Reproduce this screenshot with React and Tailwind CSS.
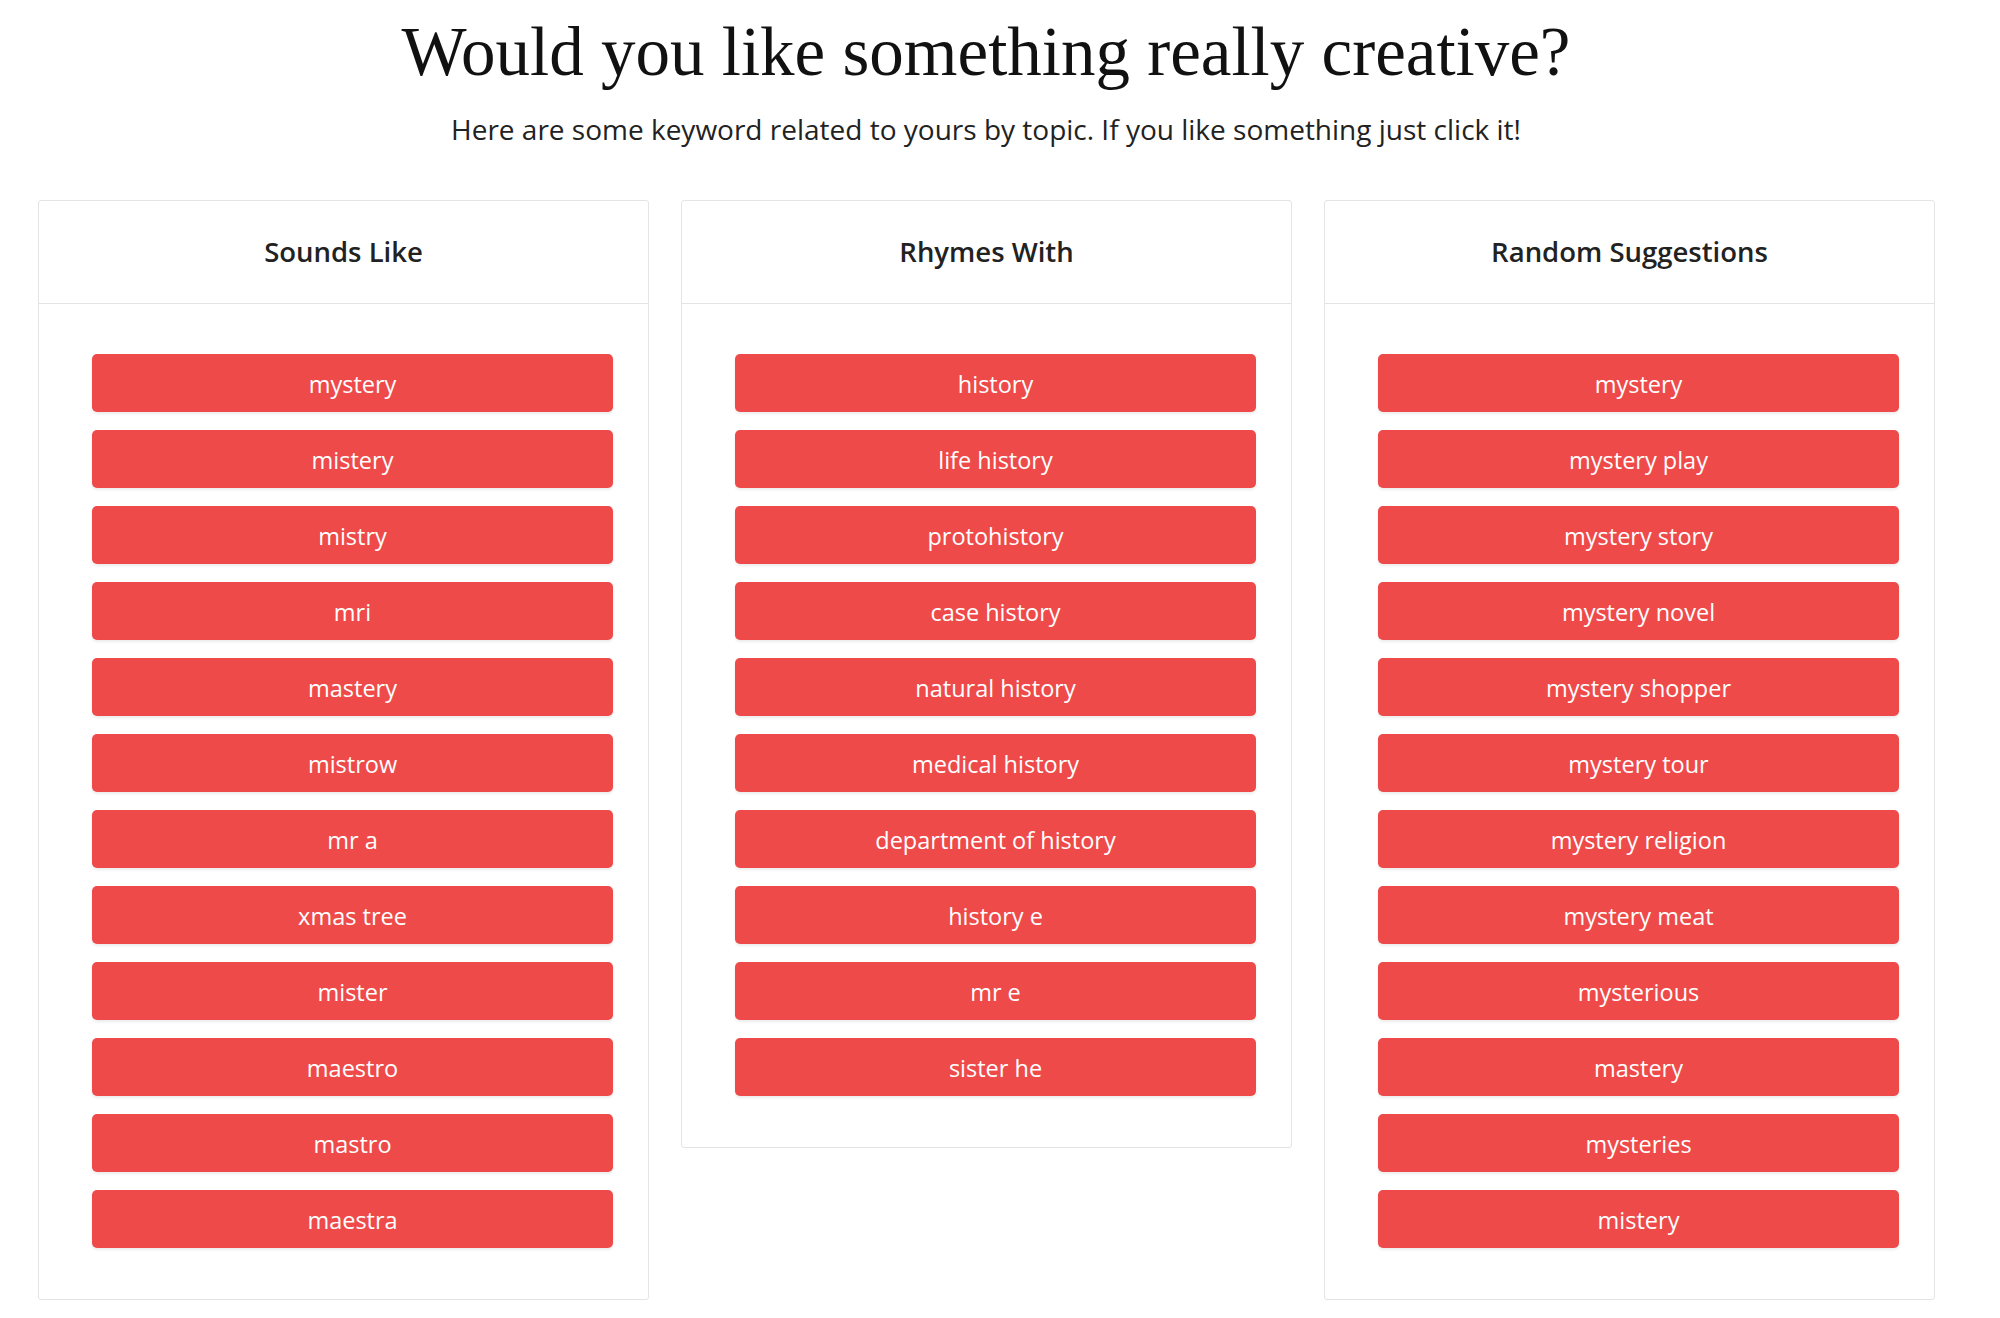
import React from 'react'

const columns = [
  {
    title: 'Sounds Like',
    words: ['mystery', 'mistery', 'mistry', 'mri', 'mastery', 'mistrow', 'mr a', 'xmas tree', 'mister', 'maestro', 'mastro', 'maestra'],
  },
  {
    title: 'Rhymes With',
    words: ['history', 'life history', 'protohistory', 'case history', 'natural history', 'medical history', 'department of history', 'history e', 'mr e', 'sister he'],
  },
  {
    title: 'Random Suggestions',
    words: ['mystery', 'mystery play', 'mystery story', 'mystery novel', 'mystery shopper', 'mystery tour', 'mystery religion', 'mystery meat', 'mysterious', 'mastery', 'mysteries', 'mistery'],
  },
]

const App = () => {
  return (
    <div className="bg-white min-h-screen font-['Open_Sans',sans-serif] text-[#212529]">
      <div className="pt-[12px] pr-[28px] text-center">
        <h1 className="font-['Liberation_Serif',serif] text-[69px] leading-[80px] text-[#111]">
          Would you like something really creative?
        </h1>
        <p className="mt-[19px] text-[28px] leading-[36px] text-[#222]">
          Here are some keyword related to yours by topic. If you like something just click it!
        </p>
      </div>

      <div className="flex items-start gap-[32px] pl-[38px] mt-[53px]">
        {columns.map((col) => (
          <div key={col.title} className="w-[611px] border border-[#e4e4e4] rounded-[3px] bg-white">
            <div className="h-[103px] flex items-center justify-center border-b border-[#e4e4e4]">
              <h3 className="text-[27.5px] font-semibold text-[#222]">{col.title}</h3>
            </div>
            <div className="pl-[53px] pr-[35px] pt-[50px] pb-[51px] flex flex-col gap-[18px]">
              {col.words.map((w, i) => (
                <button
                  key={i}
                  className="h-[58px] w-full rounded-[5px] bg-[#ef4a4a] text-white text-[23.5px] pt-[3px] shadow-[0_2px_3px_rgba(0,0,0,0.08)]"
                >
                  {w}
                </button>
              ))}
            </div>
          </div>
        ))}
      </div>
    </div>
  )
}

export default App
